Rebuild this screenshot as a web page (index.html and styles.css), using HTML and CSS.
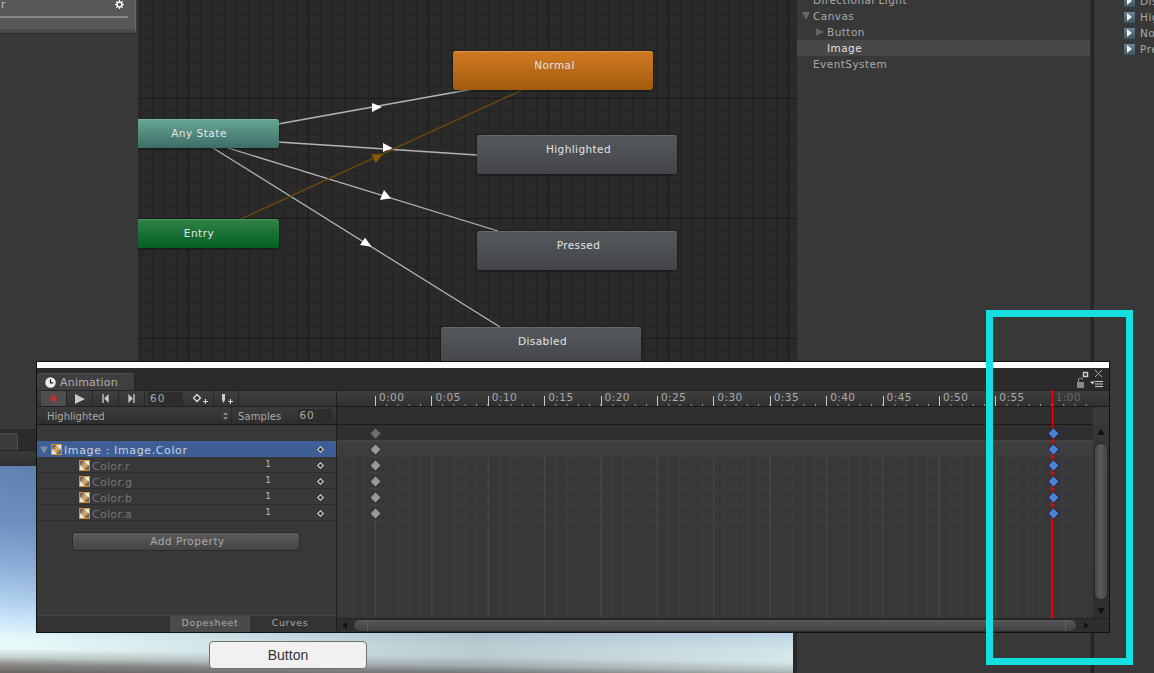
FILE: index.html
```html
<!DOCTYPE html>
<html lang="en">
<head>
<meta charset="utf-8">
<title>Unity Animation Window</title>
<link rel="stylesheet" href="styles.css">
</head>
<body>
<svg class="defs" width="0" height="0" aria-hidden="true">
  <defs>
    <symbol id="prop" viewBox="0 0 11 11">
      <rect width="11" height="11" fill="#e8e8e8"/>
      <rect width="5.5" height="5.5" fill="#6b6b6b"/>
      <rect x="5.5" y="5.5" width="5.5" height="5.5" fill="#6b6b6b"/>
      <rect x=".5" y=".5" width="10" height="10" fill="none" stroke="#d9902e"/>
      <path d="M5.5 2.5 8.5 5.5 5.5 8.5 2.5 5.5Z" fill="none" stroke="#e79a22" stroke-width="1.4"/>
    </symbol>
  </defs>
</svg>
<div class="editor">
  <aside class="left-panel">
    <div class="mini-box">
      <div class="mini-head"><span class="mini-letter">r</span>
        <svg class="gear" viewBox="0 0 10 10"><circle cx="5" cy="5" r="2.8" fill="none" stroke="#fff" stroke-width="1.6"/><path d="M5 0v2M5 8v2M0 5h2M8 5h2M1.5 1.5l1.4 1.4M7.1 7.1l1.4 1.4M8.5 1.5 7.1 2.9M2.9 7.1 1.5 8.5" stroke="#fff" stroke-width="1.2"/></svg>
      </div>
      <div class="mini-slider"></div>
    </div>
  </aside>

  <section class="graph">
    <svg class="wires" viewBox="138 0 659 429">
      <g class="wire-w">
        <path d="M278 124 473 89"/><path d="M278 142 477 155"/><path d="M228 148 498 231"/><path d="M213 148 500 327"/>
      </g>
      <path class="wire-b" d="M241 219 522 90"/>
      <path class="head-b" d="M371.500 154.300 382.500 154.300 375.800 163Z"/>
      <path class="head-w" d="M372 103 372 112 382 107Z"/>
      <path class="head-w" d="M383 143 383 152 392.500 148Z"/>
      <path class="head-w" d="M384 190 380 200 391 198.300Z"/>
      <path class="head-w" d="M365 237.700 360 245 371.700 246.700Z"/>
    </svg>
    <div class="node node-any">Any State</div>
    <div class="node node-entry">Entry</div>
    <div class="node node-state node-normal">Normal</div>
    <div class="node node-state node-grey node-high">Highlighted</div>
    <div class="node node-state node-grey node-pressed">Pressed</div>
    <div class="node node-state node-grey node-disabled">Disabled</div>
  </section>

  <div class="game-tabs"><div class="game-tabbar"><span class="game-tab"></span></div><div class="game-toolbar"></div></div>
  <section class="game"><button class="game-button">Button</button></section>
  <div class="v-divider"></div>

  <section class="hierarchy">
    <div class="h-row lvl1">Directional Light</div>
    <div class="h-row lvl1"><i class="fold fold-open"></i>Canvas</div>
    <div class="h-row lvl2"><i class="fold fold-closed"></i>Button</div>
    <div class="h-row lvl2 h-selected">Image</div>
    <div class="h-row lvl1">EventSystem</div>
  </section>
  <div class="v-divider2"></div>
  <section class="inspector">
    <div class="i-row"><i class="i-btn"></i><span>Disabled</span></div>
    <div class="i-row"><i class="i-btn"></i><span>Highlighted</span></div>
    <div class="i-row"><i class="i-btn"></i><span>Normal</span></div>
    <div class="i-row"><i class="i-btn"></i><span>Pressed</span></div>
  </section>
</div>

<section class="anim">
  <div class="anim-white"></div>
  <header class="anim-tabbar">
    <div class="anim-tab">
      <svg class="clock" viewBox="0 0 11 11"><circle cx="5.500" cy="5.500" r="5.200" fill="#eee"/><path d="M5.500 2.200V5.800H8.200" fill="none" stroke="#222" stroke-width="1.200"/></svg>
      <span>Animation</span>
    </div>
    <svg class="win-ctl" viewBox="0 0 34 22">
      <rect x="9.500" y="4.500" width="4" height="4" fill="none" stroke="#ccc" stroke-width="1.500"/>
      <path d="M21 2 28 9M28 2 21 9" stroke="#aaa" stroke-width="1"/>
      <rect x="3" y="14" width="7" height="6" fill="#8a8a8a"/><path d="M4.500 14v-2a2 2 0 0 1 4 0" fill="none" stroke="#8a8a8a" stroke-width="1.200"/>
      <path d="M16 13.500h5l-2.500 3Z" fill="#ccc"/>
      <path d="M21 13.500h8M21 16h8M21 18.500h8" stroke="#ccc" stroke-width="1.200"/>
    </svg>
  </header>
  <div class="anim-body">
    <div class="pane-left">
      <div class="toolbar">
        <span class="tb-btn tb-on"><i class="rec"></i></span>
        <span class="tb-btn"><svg class="ic-play" viewBox="0 0 10 10"><path d="M0 0 10 5 0 10Z" fill="#c9c9c9"/></svg></span>
        <span class="tb-btn"><svg class="ic-step" viewBox="0 0 7 10"><path d="M0 0h1.500v10H0Z M7 0v10L2 5Z" fill="#c9c9c9"/></svg></span>
        <span class="tb-btn"><svg class="ic-step" viewBox="0 0 7 10"><path d="M5.500 0H7v10H5.500Z M0 0v10L5 5Z" fill="#c9c9c9"/></svg></span>
        <span class="tb-input">60</span>
        <span class="tb-btn tb-wide"><svg class="ic-addkey" viewBox="0 0 15 10"><path d="M4 .5 7.500 4 4 7.500 .5 4Z" fill="none" stroke="#ddd" stroke-width="1.300"/><path d="M10 7.500h5M12.500 5v5" stroke="#ddd"/></svg></span>
        <span class="tb-btn tb-wide"><svg class="ic-addkey" viewBox="0 0 15 10"><path d="M3 0h3v6L4.500 9 3 6Z" fill="#ccc"/><path d="M9 7.500h5M11.500 5v5" stroke="#ddd"/></svg></span>
      </div>
      <div class="clipbar">
        <div class="clip-select"><span>Highlighted</span><svg class="updown" viewBox="0 0 5 8"><path d="M2.500 0 5 3H0ZM2.500 8 0 5H5Z" fill="#888"/></svg></div>
        <span class="samples">Samples</span>
        <span class="samples-input">60</span>
      </div>
      <div class="prop-spacer"></div>
      <div class="prop prop-main">
        <svg class="p-fold" viewBox="0 0 9 8"><path d="M0 0H9L4.500 8Z" fill="#7e8ea8"/></svg>
        <svg class="p-ic"><use href="#prop"/></svg>
        <span class="p-name">Image : Image.Color</span>
        <i class="dot-key"></i>
      </div>
      <div class="prop prop-sub"><svg class="p-ic"><use href="#prop"/></svg><span class="p-name">Color.r</span><span class="p-val">1</span><i class="dot-key"></i></div>
      <div class="prop prop-sub"><svg class="p-ic"><use href="#prop"/></svg><span class="p-name">Color.g</span><span class="p-val">1</span><i class="dot-key"></i></div>
      <div class="prop prop-sub"><svg class="p-ic"><use href="#prop"/></svg><span class="p-name">Color.b</span><span class="p-val">1</span><i class="dot-key"></i></div>
      <div class="prop prop-sub"><svg class="p-ic"><use href="#prop"/></svg><span class="p-name">Color.a</span><span class="p-val">1</span><i class="dot-key"></i></div>
      <div class="add-wrap"><button class="add-prop">Add Property</button></div>
      <div class="view-tabs"><span class="vt vt-on">Dopesheet</span><span class="vt">Curves</span></div>
    </div>

    <div class="pane-right">
      <div class="ruler">
        <span class="tick">0:00</span><span class="tick">0:05</span><span class="tick">0:10</span><span class="tick">0:15</span><span class="tick">0:20</span><span class="tick">0:25</span><span class="tick">0:30</span><span class="tick">0:35</span><span class="tick">0:40</span><span class="tick">0:45</span><span class="tick">0:50</span><span class="tick">0:55</span><span class="tick tick-end">1:00</span>
      </div>
      <div class="eventbar"><div class="eventbar-main"></div><div class="eventbar-end"></div></div>
      <div class="tracks-row">
        <div class="tracks">
          <div class="trk trk-sum"><i class="key key-dim"></i><i class="key-b"></i></div>
          <div class="grid-area">
            <div class="trk trk-sel"><i class="key"></i><i class="key-b"></i></div>
            <div class="trk"><i class="key"></i><i class="key-b"></i></div>
            <div class="trk"><i class="key"></i><i class="key-b"></i></div>
            <div class="trk"><i class="key"></i><i class="key-b"></i></div>
            <div class="trk"><i class="key"></i><i class="key-b"></i></div>
          </div>
          <div class="playhead"></div>
        </div>
        <div class="vscroll">
          <svg class="sb-arrow" viewBox="0 0 8 6"><path d="M4 0 8 6H0Z" fill="#111"/></svg>
          <div class="v-thumb"></div>
          <svg class="sb-arrow" viewBox="0 0 8 6"><path d="M0 0H8L4 6Z" fill="#111"/></svg>
        </div>
      </div>
      <div class="hscroll">
        <svg class="sb-arrow-h" viewBox="0 0 6 8"><path d="M6 0V8L0 4Z" fill="#111"/></svg>
        <div class="h-thumb"></div>
        <svg class="sb-arrow-h" viewBox="0 0 6 8"><path d="M0 0V8L6 4Z" fill="#111"/></svg>
      </div>
    </div>
  </div>
</section>

<div class="focus-box"></div>
</body>
</html>
```

FILE: styles.css
```css
* { box-sizing: border-box; }
html, body { margin: 0; padding: 0; }
body {
  position: relative;
  width: 1154px;
  height: 673px;
  overflow: hidden;
  background: #383838;
  font-family: "DejaVu Sans", "Noto Sans", sans-serif;
  font-size: 10.5px;
  letter-spacing: .5px;
}
i { display: block; font-style: normal; }
.defs { position: absolute; }

.editor {
  display: grid;
  grid-template-columns: 138px 655px 4px 293px 4px 60px;
  grid-template-rows: 429px 37px 207px;
  width: 1154px;
  height: 673px;
}

/* left panel */
.left-panel { grid-column: 1; grid-row: 1; background: #383838; }
.mini-box {
  width: 136px;
  height: 33px;
  background: #585858;
  border-right: 1px solid #666;
  border-bottom: 1px solid #444;
  box-shadow: inset 0 -3px 0 #4a4a4a, 0 1px 1px #303030;
}
.mini-head { display: flex; justify-content: space-between; align-items: center; height: 8px; padding: 0 11px 0 1px; color: #bbb; }
.gear { width: 9px; height: 9px; }
.mini-slider { height: 2px; width: 128px; margin-top: 8px; background: #8a8a8a; }

/* graph */
.graph {
  grid-column: 2 / 4;
  grid-row: 1;
  position: relative;
  overflow: hidden;
  background-color: #2a2a2a;
  background-image:
    linear-gradient(90deg, #1a1a1a 1px, transparent 1px),
    linear-gradient(#1a1a1a 1px, transparent 1px),
    linear-gradient(90deg, #232323 1px, transparent 1px),
    linear-gradient(#232323 1px, transparent 1px);
  background-size: 120px 120px, 120px 120px, 12px 12px, 12px 12px;
  background-position: 50px 98px, 50px 98px, 2px 2px, 2px 2px;
}
.wires { position: absolute; left: 0; top: 0; width: 659px; height: 429px; }
.wire-w path { fill: none; stroke: #b4b4b4; stroke-width: 1.300; }
.wire-b { fill: none; stroke: #6f4a08; stroke-width: 1.300; }
.head-w { fill: #fff; }
.head-b { fill: #8a5a00; }

.node {
  position: absolute;
  display: flex;
  align-items: center;
  justify-content: center;
  border-radius: 3px;
  color: #e4e4e4;
  box-shadow: 0 1px 3px rgba(0, 0, 0, .55);
}
.node-any {
  left: -19px; top: 119px; width: 160px; height: 29px;
  padding-bottom: 2px;
  background: linear-gradient(#66a592, #3c6c66);
  border-top: 1px solid #79b3a2;
}
.node-entry {
  left: -19px; top: 219px; width: 160px; height: 29px;
  padding-bottom: 2px;
  background: linear-gradient(#2f8247, #045f25);
  border-top: 1px solid #4a9460;
}
.node-state { width: 200px; height: 39px; align-items: flex-start; padding: 7px 0 0 3px; letter-spacing: .42px; }
.node-grey { background: linear-gradient(#54585b, #43454a); border-top: 1px solid #66696c; }
.node-normal {
  left: 315px; top: 51px;
  background: linear-gradient(#d07a20, #a25a0e);
  border-top: 1px solid #e09a50;
}
.node-high { left: 339px; top: 135px; }
.node-pressed { left: 339px; top: 231px; }
.node-disabled { left: 303px; top: 327px; }

/* game view */
.game-tabs { grid-column: 1 / 3; grid-row: 2; }
.game-tabbar { height: 21px; background: #2a2a2a; padding-top: 4px; }
.game-tab { display: block; width: 18px; height: 17px; background: #3c3c3c; border-radius: 0 3px 0 0; border-right: 1px solid #4d4d4d; border-top: 1px solid #4a4a4a; }
.game-toolbar { height: 16px; background: linear-gradient(#3a3a3a, #2e2e2e); border-top: 1px solid #222; }
.game {
  grid-column: 1 / 3;
  grid-row: 3;
  padding: 175px 0 0 209px;
  background:
    linear-gradient(90deg, rgba(70, 80, 95, 0) 0, rgba(70, 80, 95, .28) 60%, rgba(70, 80, 95, .12) 100%),
    linear-gradient(181deg, #5c7ead 0, #6f90c0 70px, #8baad6 110px, #b2d2f0 150px, #cfe9fb 170px, #e7fbfb 186px, #e9fbfb 196px, #c3cfcd 205px, #8c8b88 212px, #6c6765 220px);
}
.game-button {
  display: block;
  width: 158px;
  height: 28px;
  padding: 0;
  background: #f1f1f1;
  border: 1px solid #6f6f6f;
  border-radius: 4px;
  font-family: "Liberation Sans", Arial, sans-serif;
  font-size: 14px;
  letter-spacing: 0;
  color: #333;
}
.v-divider { grid-column: 3; grid-row: 2 / 4; background: #292929; }

/* hierarchy */
.hierarchy { grid-column: 4; grid-row: 1 / 4; padding-top: 0; color: #aaa; overflow: hidden; }
.h-row { position: relative; display: flex; align-items: center; height: 16px; letter-spacing: .45px; }
.h-row:first-child { margin-top: -8px; }
.lvl1 { padding-left: 16px; }
.lvl2 { padding-left: 30px; }
.h-selected { background: #484848; color: #e2e2e2; }
.fold { width: 0; height: 0; }
.fold-open {
  margin-left: -11px; margin-right: 3px;
  border-left: 4px solid transparent; border-right: 4px solid transparent; border-top: 8px solid #666;
}
.fold-closed {
  margin-left: -11px; margin-right: 3px;
  border-top: 4px solid transparent; border-bottom: 4px solid transparent; border-left: 8px solid #666;
}
.v-divider2 { grid-column: 5; grid-row: 1 / 4; background: #252525; border-left: 1px solid #303030; }

/* inspector */
.inspector { grid-column: 6; grid-row: 1 / 4; padding-left: 29px; color: #aaa; overflow: hidden; }
.i-row { display: flex; align-items: center; gap: 4px; height: 16px; white-space: nowrap; }
.i-row:first-child { margin-top: -7px; }
.i-btn {
  position: relative;
  flex: none;
  width: 13px;
  height: 13px;
  background: linear-gradient(#6d8391, #3f535f);
  border: 1px solid #2d3a42;
}
.i-btn::after {
  content: "";
  display: block;
  width: 0; height: 0;
  margin: 1px 0 0 3px;
  border-top: 4px solid transparent; border-bottom: 4px solid transparent; border-left: 5px solid #eee;
}

/* animation window */
.anim {
  position: absolute;
  left: 36px;
  top: 361px;
  width: 1074px;
  height: 272px;
  display: flex;
  flex-direction: column;
  border: 1px solid #111;
  background: #383838;
  color: #aaa;
}
.anim-white { flex: none; height: 6px; background: #fff; }
.anim-tabbar { flex: none; display: flex; justify-content: space-between; align-items: flex-end; height: 22px; background: #2a2a2a; }
.anim-tab {
  display: flex;
  align-items: center;
  gap: 4px;
  width: 98px;
  height: 17px;
  padding: 1px 0 0 8px;
  background: #3f3f3f;
  border-top: 1px solid #4f4f4f;
  border-right: 1px solid #222;
  border-radius: 3px 3px 0 0;
  font-size: 11px;
  letter-spacing: .2px;
  color: #b0b0b0;
}
.clock { width: 11px; height: 11px; }
.win-ctl { width: 34px; height: 22px; margin-right: 1px; }
.anim-body { flex: 1; display: flex; min-height: 0; }

.pane-left { flex: none; width: 300px; display: flex; flex-direction: column; border-right: 1px solid #1e1e1e; }
.toolbar { flex: none; display: flex; align-items: stretch; height: 17px; padding-left: 4px; background: linear-gradient(#3f3f3f, #323232); border-bottom: 1px solid #1e1e1e; border-top: 1px solid #222; }
.tb-btn { display: flex; align-items: center; justify-content: center; width: 26px; border-right: 1px solid #272727; }
.tb-on { background: #4e4e4e; }
.rec { width: 7px; height: 7px; border-radius: 50%; background: #a83838; }
.ic-play { width: 10px; height: 10px; }
.ic-step { width: 7px; height: 9px; }
.tb-input { width: 35px; margin: 1px 5px 1px 3px; padding-left: 2px; background: #2d2d2d; line-height: 13px; color: #aaa; letter-spacing: 1px; }
.tb-wide { width: 26px; }
.tb-wide:last-child { width: 25px; }
.ic-addkey { width: 15px; height: 10px; }

.clipbar { flex: none; display: flex; align-items: center; height: 18px; padding-left: 4px; font-size: 10px; letter-spacing: 0; background: linear-gradient(#3c3c3c, #2e2e2e); border-bottom: 1px solid #1a1a1a; }
.clip-select { display: flex; align-items: center; justify-content: space-between; width: 191px; height: 100%; padding: 1px 3px 0 6px; border-right: 1px solid #2a2a2a; }
.updown { width: 5px; height: 8px; }
.samples { margin: 2px 0 0 6px; letter-spacing: .1px; }
.samples-input { width: 34px; margin-left: 17px; height: 13px; line-height: 13px; padding-left: 1px; background: #2d2d2d; font-size: 10.5px; letter-spacing: 1px; }

.prop-spacer { flex: none; height: 16px; }
.prop { position: relative; flex: none; display: flex; align-items: center; height: 16px; border-bottom: 1px solid #2f2f2f; }
.prop-main { padding: 1px 0 0 3px; background: #3e5f96; color: #c8d0dc; border-bottom: none; }
.prop-sub { padding: 2px 0 0 42px; color: #767676; }
.p-fold { width: 8px; height: 8px; margin-right: 3px; }
.p-ic { flex: none; width: 11px; height: 11px; margin-right: 2px; }
.p-name { padding-top: 2px; }
.prop-main .p-name { letter-spacing: .62px; font-size: 11px; }
.prop-sub .p-name { font-size: 11px; letter-spacing: .3px; }
.p-val { position: absolute; left: 228px; top: 1px; color: #b5b5b5; font-size: 9.5px; letter-spacing: 0; }
.dot-key {
  position: absolute;
  left: 281px;
  top: 6px;
  width: 5px;
  height: 5px;
  background: #2c2c2c;
  border: 1px solid #ddd;
  transform: rotate(45deg);
}
.add-wrap { flex: 1; padding: 11px 0 0 35px; }
.add-prop {
  display: block;
  width: 228px;
  height: 19px;
  padding: 0 0 2px 3px;
  background: linear-gradient(#5b5b5b, #444);
  border: 1px solid #2a2a2a;
  border-radius: 3px;
  font-family: inherit;
  font-size: 10.5px;
  letter-spacing: .55px;
  color: #aaa;
}
.view-tabs { flex: none; display: flex; justify-content: flex-end; height: 17px; padding-right: 6px; background: #333; border-top: 1px solid #454545; }
.vt { display: flex; align-items: center; justify-content: center; width: 80px; padding-bottom: 3px; font-size: 9.5px; letter-spacing: .6px; }
.vt-on { background: #4a4a4a; }

.pane-right { flex: 1; min-width: 0; display: flex; flex-direction: column; }
.ruler {
  flex: none;
  display: flex;
  height: 17px;
  padding-left: 38px;
  overflow: hidden;
  background: linear-gradient(#3f3f3f, #303030);
  border-bottom: 1px solid #1a1a1a;
  border-top: 1px solid #222;
}
.tick {
  flex: none;
  width: 56.400px;
  height: 10px;
  margin-top: 5px;
  padding-left: 3px;
  border-left: 1px solid #c8c8c8;
  background: linear-gradient(90deg, #9a9a9a 1px, transparent 1px) -1px 100% / 11.280px 2px repeat-x;
  font-size: 10.500px;
  line-height: 3px;
  letter-spacing: .45px;
  color: #aaa;
}
.tick-end { width: 40px; border-left-color: transparent; color: #666; }
.eventbar { flex: none; display: flex; height: 18px; }
.eventbar-main { flex: 1; background: #2f2f2f; border-bottom: 1px solid #1a1a1a; }
.eventbar-end { width: 16px; background: #3a3a3a; }
.tracks-row { flex: 1; min-height: 0; display: flex; }
.tracks { position: relative; flex: 1; min-width: 0; display: flex; flex-direction: column; }
.grid-area {
  flex: 1;
  background-color: #383838;
  background-image:
    linear-gradient(90deg, #484848 1px, transparent 1px),
    linear-gradient(90deg, #404040 1px, transparent 1px);
  background-size: 56.400px 100%, 11.280px 100%;
  background-position: 38px 0, 38px 0;
}
.trk { display: flex; align-items: center; height: 16px; padding: 1px 0 0 35px; border-bottom: 1px solid #3f3f3f; }
.trk-sum { flex: none; background: #2f2f2f; border-bottom: 1px solid #414141; }
.trk-sel { background: #3d3d3d; border-top: 1px solid #474747; border-left: 1px solid #474747; padding: 0 0 0 34px; }
.key { flex: none; width: 7px; height: 7px; background: #9a9a9a; box-shadow: 0 0 0 1px #333; transform: rotate(45deg); }
.key-dim { background: #6f6f6f; }
.key-b { flex: none; width: 7px; height: 7px; margin-left: 671px; background: #4f80d4; box-shadow: 0 0 0 1px #1d2c48; transform: rotate(45deg); position: relative; z-index: 2; }
.playhead { position: absolute; left: 715px; top: -35px; bottom: 0; width: 1px; background: #f00; }

.vscroll { flex: none; width: 16px; display: flex; flex-direction: column; align-items: center; padding: 4px 0; background: linear-gradient(#363636, #2e2e2e); }
.sb-arrow { flex: none; width: 8px; height: 6px; }
.v-thumb { flex: 1; width: 14px; margin: 8px 0 8px; border-radius: 7px; background: linear-gradient(90deg, #474747, #5c5c5c 45%, #444); border: 1px solid #2b2b2b; }
.hscroll { flex: none; display: flex; align-items: center; height: 14px; padding: 0 0 0 5px; background: #2e2e2e; border-top: 1px solid #222; }
.sb-arrow-h { flex: none; width: 5px; height: 7px; }
.h-thumb {
  flex: none;
  width: 724px;
  height: 13px;
  margin: 0 7px 0 6px;
  border-radius: 7px;
  background:
    linear-gradient(90deg, transparent 13px, #5e5e5e 13px, #5e5e5e 14px, transparent 14px, transparent 711px, #5e5e5e 711px, #5e5e5e 712px, transparent 712px),
    linear-gradient(#575757, #404040);
  border: 1px solid #2b2b2b;
}

/* highlight frame drawn over the screenshot */
.focus-box {
  position: absolute;
  left: 986px;
  top: 310px;
  width: 147px;
  height: 355px;
  border: 7px solid #16dfe0;
  pointer-events: none;
}
```
